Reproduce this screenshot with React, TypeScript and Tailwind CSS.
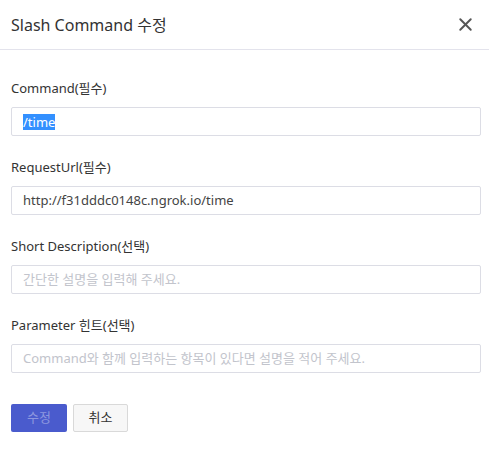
import { X } from 'lucide-react';

const fieldBox =
  'h-[29px] w-full rounded-[2px] border border-[#dcdde5] bg-white px-[11px] flex items-center text-[13px]';

const Field = ({
  label,
  value,
  placeholder,
}: {
  label: string;
  value?: string;
  placeholder?: string;
}) => (
  <div className="mb-[22px]">
    <label className="block text-[13px] text-[#333] mb-[10px] leading-[18px]">{label}</label>
    <div className={fieldBox}>
      {value ? (
        <span className="text-[#444]">{value}</span>
      ) : (
        <span className="text-[#c2c4cc]">{placeholder}</span>
      )}
    </div>
  </div>
);

export default function App() {
  return (
    <div
      className="w-[489px] h-[451px] bg-white"
      style={{ fontFamily: '"Noto Sans", "Noto Sans CJK KR", sans-serif' }}
    >
      <div className="h-[50px] flex items-center justify-between px-[11px] border-b border-[#e3e3ec]">
        <h1 className="text-[16px] text-[#333] font-normal">Slash Command 수정</h1>
        <button className="mr-[2px] text-[#555]">
          <X className="h-[21px] w-[21px]" strokeWidth={2.2} />
        </button>
      </div>

      <div className="px-[11px] pt-[29px] pr-[8px]">
        <div className="mb-[22px]">
          <label className="block text-[13px] text-[#333] mb-[10px] leading-[18px]">
            Command(필수)
          </label>
          <div className={`${fieldBox} border-[#c9ccd6]`}>
            <span className="bg-[#3390ff] text-white leading-[16px]">/time</span>
          </div>
        </div>
        <Field label="RequestUrl(필수)" value="http://f31dddc0148c.ngrok.io/time" />
        <Field label="Short Description(선택)" placeholder="간단한 설명을 입력해 주세요." />
        <Field
          label="Parameter 힌트(선택)"
          placeholder="Command와 함께 입력하는 항목이 있다면 설명을 적어 주세요."
        />

        <div className="flex gap-[6px] pt-[9px]">
          <button className="h-[28px] w-[56px] rounded-[2px] bg-[#4a5bcd] text-[13px] text-[#8d97df]">
            수정
          </button>
          <button className="h-[28px] w-[55px] rounded-[2px] border border-[#d9d9d9] bg-[#f7f7f7] text-[13px] text-[#333]">
            취소
          </button>
        </div>
      </div>
    </div>
  );
}
